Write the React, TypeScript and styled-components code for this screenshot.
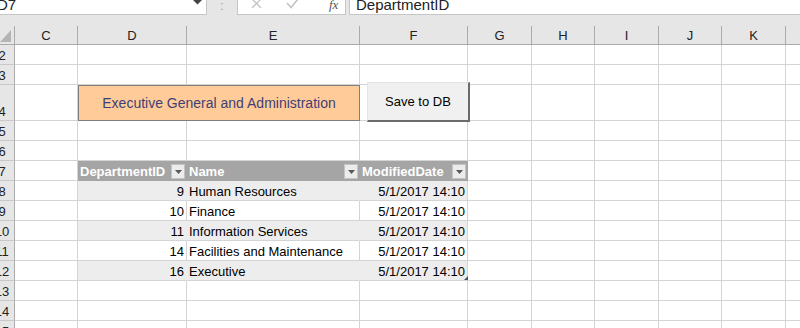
import React from "react";
import styled, { createGlobalStyle } from "styled-components";

const GlobalStyle = createGlobalStyle`
  html, body {
    margin: 0;
    padding: 0;
    overflow: hidden;
    background: #ffffff;
    font-family: "Liberation Sans", Arial, sans-serif;
  }
`;

const colors = {
  chrome: "#e6e6e6",
  boxLine: "#c6c6c6",
  headLine: "#ababab",
  grid: "#d4d4d4",
  tableHead: "#a5a5a5",
  band: "#ededed",
  input: "#ffcc99",
  inputText: "#3f3f76",
  inputLine: "#7f7f7f",
};

const COLS = [
  { id: "C", w: 63 },
  { id: "D", w: 109 },
  { id: "E", w: 173 },
  { id: "F", w: 108 },
  { id: "G", w: 64 },
  { id: "H", w: 63 },
  { id: "I", w: 64 },
  { id: "J", w: 63 },
  { id: "K", w: 64 },
  { id: "L", w: 64 },
];

const ROWS = [
  { id: 9, name: "Human Resources" },
  { id: 10, name: "Finance" },
  { id: 11, name: "Information Services" },
  { id: 14, name: "Facilities and Maintenance" },
  { id: 16, name: "Executive" },
];

const Page = styled.div`
  position: relative;
  width: 800px;
  height: 328px;
  overflow: hidden;
`;

const FormulaBar = styled.div`
  display: flex;
  align-items: flex-start;
  height: 26px;
  background: ${colors.chrome};
`;

const NameBox = styled.div`
  position: relative;
  width: 207px;
  height: 15px;
  box-sizing: border-box;
  background: #fff;
  border-right: 1px solid ${colors.boxLine};
  border-bottom: 1px solid ${colors.boxLine};
  font-size: 15px;
  line-height: 15px;
  display: flex;
  align-items: flex-end;
  padding-bottom: 2px;
  overflow: hidden;
  color: #222;

  span {
    margin-left: -3px;
  }
  svg {
    position: absolute;
    right: 4px;
    top: 0;
  }
`;

const Grip = styled.div`
  width: 30px;
  text-align: center;
  color: #9a9a9a;
  font-size: 12px;
  line-height: 12px;
`;

const FuncBox = styled.div`
  width: 109px;
  height: 15px;
  box-sizing: border-box;
  background: #fff;
  border-left: 1px solid ${colors.boxLine};
  border-right: 1px solid ${colors.boxLine};
  border-bottom: 1px solid ${colors.boxLine};
  display: flex;
  align-items: flex-start;
  overflow: hidden;
  padding-left: 13px;
  gap: 24px;

  .fx {
    margin-left: 6px;
    margin-top: -2px;
    font-family: "Liberation Serif", serif;
    font-style: italic;
    font-size: 13px;
    line-height: 13px;
    color: #555;
  }
`;

const FormulaInput = styled.div`
  flex: 1;
  margin-left: 3px;
  height: 15px;
  box-sizing: border-box;
  background: #fff;
  border-left: 1px solid ${colors.boxLine};
  border-bottom: 1px solid ${colors.boxLine};
  font-size: 15px;
  line-height: 15px;
  display: flex;
  align-items: flex-end;
  padding: 0 0 2px 6px;
  overflow: hidden;
  color: #222;
`;

const Sheet = styled.div`
  margin-left: -10px;
`;

const Row = styled.div<{ $h: number }>`
  display: flex;
  height: ${(p) => p.$h}px;
`;

const Corner = styled.div`
  width: 25px;
  flex: none;
  box-sizing: border-box;
  background: ${colors.chrome};
  border-right: 1px solid ${colors.headLine};
  border-bottom: 1px solid ${colors.headLine};
  display: flex;
  align-items: flex-end;
  justify-content: flex-end;
  padding: 0 3px 2px 0;
`;

const ColHead = styled.div<{ $w: number }>`
  width: ${(p) => p.$w}px;
  flex: none;
  box-sizing: border-box;
  background: ${colors.chrome};
  border-right: 1px solid ${colors.headLine};
  border-bottom: 1px solid ${colors.headLine};
  display: flex;
  align-items: center;
  justify-content: center;
  font-size: 13px;
  color: #222;
`;

const RowHead = styled.div`
  width: 25px;
  flex: none;
  box-sizing: border-box;
  background: ${colors.chrome};
  border-right: 1px solid ${colors.headLine};
  border-bottom: 1px solid #c8c8c8;
  display: flex;
  align-items: flex-end;
  justify-content: center;
  font-size: 13px;
  line-height: 16px;
  color: #222;
`;

const Cell = styled.div<{
  $w: number;
  $bg?: string;
  $line?: string;
  $align?: "left" | "right";
}>`
  position: relative;
  width: ${(p) => p.$w}px;
  flex: none;
  box-sizing: border-box;
  background: ${(p) => p.$bg || "#fff"};
  border-right: 1px solid ${(p) => p.$line || colors.grid};
  border-bottom: 1px solid ${colors.grid};
  display: flex;
  align-items: flex-end;
  justify-content: ${(p) => (p.$align === "right" ? "flex-end" : "flex-start")};
  padding: 0 2px;
  font-size: 13px;
  line-height: 16px;
  color: #000;
  white-space: nowrap;
`;

const InputCell = styled.div<{ $w: number }>`
  width: ${(p) => p.$w}px;
  flex: none;
  box-sizing: border-box;
  background: ${colors.input};
  border: 1px solid ${colors.inputLine};
  display: flex;
  align-items: center;
  justify-content: center;
  font-size: 14px;
  color: ${colors.inputText};
`;

const TableHead = styled.div<{ $w: number }>`
  width: ${(p) => p.$w}px;
  flex: none;
  box-sizing: border-box;
  background: ${colors.tableHead};
  border-bottom: 1px solid ${colors.tableHead};
  display: flex;
  align-items: flex-end;
  padding-left: 2px;
  font-size: 13px;
  font-weight: bold;
  line-height: 16px;
  color: #fff;
  white-space: nowrap;
`;

const FilterButton = styled.div`
  margin: 0 2px 1px auto;
  align-self: flex-end;
  width: 14px;
  height: 15px;
  box-sizing: border-box;
  background: #ececec;
  border: 1px solid #c4c4c4;
  display: flex;
  align-items: center;
  justify-content: center;
`;

const ResizeHandle = styled.div`
  position: absolute;
  right: -1px;
  bottom: 0;
  width: 4px;
  height: 4px;
  background: #44546a;
  clip-path: polygon(100% 0, 100% 100%, 0 100%);
`;

const SaveButton = styled.div`
  position: absolute;
  left: 367px;
  top: 82px;
  width: 103px;
  height: 40px;
  box-sizing: border-box;
  background: #f0f0f0;
  border-top: 1px solid #e3e3e3;
  border-left: 1px solid #e3e3e3;
  border-right: 2px solid #6b6b6b;
  border-bottom: 2px solid #6b6b6b;
  display: flex;
  align-items: center;
  justify-content: center;
  font-size: 13px;
  color: #000;
`;

const Caret = () => (
  <svg width="7" height="4" viewBox="0 0 7 4">
    <polygon points="0,0 7,0 3.5,4" fill="#595959" />
  </svg>
);

const widthOf = (id: string) => COLS.find((c) => c.id === id)!.w;

const PlainCells = ({ skip = [] as string[] }) => (
  <>
    {COLS.filter((c) => !skip.includes(c.id)).map((c) => (
      <Cell key={c.id} $w={c.w} />
    ))}
  </>
);

const App = () => {
  const renderRow = (r: number) => {
    if (r === 4) {
      return (
        <>
          <Cell $w={widthOf("C")} />
          <InputCell $w={widthOf("D") + widthOf("E")}>
            Executive General and Administration
          </InputCell>
          <PlainCells skip={["C", "D", "E"]} />
        </>
      );
    }
    if (r === 7) {
      return (
        <>
          <Cell $w={widthOf("C")} />
          {["DepartmentID", "Name", "ModifiedDate"].map((label, i) => (
            <TableHead key={label} $w={widthOf(["D", "E", "F"][i])}>
              {label}
              <FilterButton>
                <Caret />
              </FilterButton>
            </TableHead>
          ))}
          <PlainCells skip={["C", "D", "E", "F"]} />
        </>
      );
    }
    if (r >= 8 && r <= 12) {
      const item = ROWS[r - 8];
      const banded = (r - 8) % 2 === 0;
      const bg = banded ? colors.band : "#fff";
      const line = banded ? colors.band : colors.grid;
      return (
        <>
          <Cell $w={widthOf("C")} />
          <Cell $w={widthOf("D")} $bg={bg} $line={line} $align="right">
            {item.id}
          </Cell>
          <Cell $w={widthOf("E")} $bg={bg} $line={line}>
            {item.name}
          </Cell>
          <Cell $w={widthOf("F")} $bg={bg} $align="right">
            5/1/2017 14:10
            {r === 12 && <ResizeHandle />}
          </Cell>
          <PlainCells skip={["C", "D", "E", "F"]} />
        </>
      );
    }
    return <PlainCells />;
  };

  const rowNumbers = Array.from({ length: 14 }, (_, i) => i + 2);

  return (
    <Page>
      <GlobalStyle />
      <FormulaBar>
        <NameBox>
          <span>D7</span>
          <svg width="9" height="5" viewBox="0 0 9 5">
            <polygon points="0,0 9,0 4.5,4.5" fill="#444" />
          </svg>
        </NameBox>
        <Grip>:</Grip>
        <FuncBox>
          <svg width="11" height="9" viewBox="0 0 11 9">
            <path d="M1 -1 L10 8 M10 -1 L1 8" stroke="#c4c4c4" strokeWidth="1.3" fill="none" />
          </svg>
          <svg width="13" height="9" viewBox="0 0 13 9">
            <path d="M1 3 L5 7.5 L12 -1" stroke="#c4c4c4" strokeWidth="1.6" fill="none" />
          </svg>
          <span className="fx">fx</span>
        </FuncBox>
        <FormulaInput>DepartmentID</FormulaInput>
      </FormulaBar>
      <Sheet>
        <Row $h={19}>
          <Corner>
            <svg width="11" height="12" viewBox="0 0 11 12">
              <polygon points="11,0 11,12 0,12" fill="#b4b4b4" />
            </svg>
          </Corner>
          {COLS.map((c) => (
            <ColHead key={c.id} $w={c.w}>
              {c.id}
            </ColHead>
          ))}
        </Row>
        {rowNumbers.map((r) => (
          <Row key={r} $h={r === 4 ? 36 : 20}>
            <RowHead>{r}</RowHead>
            {renderRow(r)}
          </Row>
        ))}
      </Sheet>
      <SaveButton>Save to DB</SaveButton>
    </Page>
  );
};

export default App;
